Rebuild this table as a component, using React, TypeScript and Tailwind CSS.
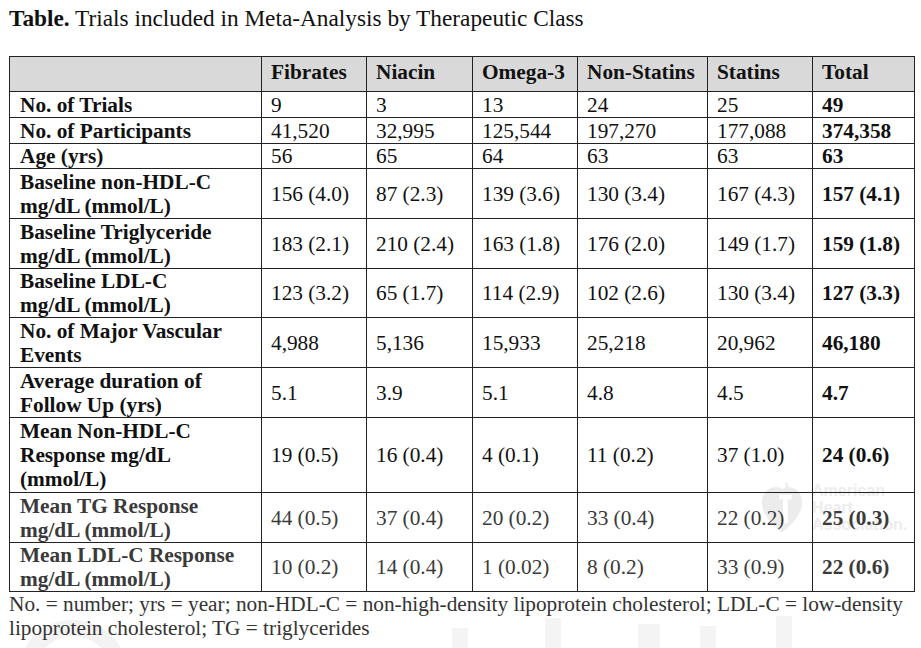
import React from "react";

type Row = {
  label: string[];
  values: string[];
  total: string;
  h: string;
  dim?: boolean;
};

const rows: Row[] = [
  { label: ["No. of Trials"], values: ["9", "3", "13", "24", "25"], total: "49", h: "h-[26px]" },
  { label: ["No. of Participants"], values: ["41,520", "32,995", "125,544", "197,270", "177,088"], total: "374,358", h: "h-[26px]" },
  { label: ["Age (yrs)"], values: ["56", "65", "64", "63", "63"], total: "63", h: "h-[25px]" },
  { label: ["Baseline non-HDL-C", "mg/dL (mmol/L)"], values: ["156 (4.0)", "87 (2.3)", "139 (3.6)", "130 (3.4)", "167 (4.3)"], total: "157 (4.1)", h: "h-[50px]" },
  { label: ["Baseline Triglyceride", "mg/dL (mmol/L)"], values: ["183 (2.1)", "210 (2.4)", "163 (1.8)", "176 (2.0)", "149 (1.7)"], total: "159 (1.8)", h: "h-[50px]" },
  { label: ["Baseline LDL-C", "mg/dL (mmol/L)"], values: ["123 (3.2)", "65 (1.7)", "114 (2.9)", "102 (2.6)", "130 (3.4)"], total: "127 (3.3)", h: "h-[49px]" },
  { label: ["No. of Major Vascular", "Events"], values: ["4,988", "5,136", "15,933", "25,218", "20,962"], total: "46,180", h: "h-[50px]" },
  { label: ["Average duration of", "Follow Up (yrs)"], values: ["5.1", "3.9", "5.1", "4.8", "4.5"], total: "4.7", h: "h-[50px]" },
  { label: ["Mean Non-HDL-C", "Response mg/dL", "(mmol/L)"], values: ["19 (0.5)", "16 (0.4)", "4 (0.1)", "11 (0.2)", "37 (1.0)"], total: "24 (0.6)", h: "h-[75px]" },
  { label: ["Mean TG Response", "mg/dL (mmol/L)"], values: ["44 (0.5)", "37 (0.4)", "20 (0.2)", "33 (0.4)", "22 (0.2)"], total: "25 (0.3)", h: "h-[50px]", dim: true },
  { label: ["Mean LDL-C Response", "mg/dL (mmol/L)"], values: ["10 (0.2)", "14 (0.4)", "1 (0.02)", "8 (0.2)", "33 (0.9)"], total: "22 (0.6)", h: "h-[49px]", dim: true },
];

const headers = ["Fibrates", "Niacin", "Omega-3", "Non-Statins", "Statins", "Total"];

// faint publisher watermark behind the lower right of the table
function Watermark() {
  return (
    <div className="absolute left-[760px] top-[478px] flex items-start gap-[8px] pointer-events-none" aria-hidden>
      <svg width="44" height="58" viewBox="0 0 46 58">
        <path
          d="M23 56 C14 48 2 38 2 24 C2 14 9 8 17 8 C20 8 22 9 23 11 C24 9 26 8 29 8 C37 8 44 14 44 24 C44 38 32 48 23 56 Z"
          fill="#ececec"
        />
        <path d="M27 2 C31 6 30 10 27 12 C28 9 26 7 27 2 Z" fill="#ececec" />
        <rect x="24" y="20" width="5" height="26" fill="#ffffff" />
        <rect x="20" y="16" width="13" height="5" fill="#ffffff" />
      </svg>
      <div className="flex flex-col pt-[4px] text-[16px] leading-[17px] font-bold text-[#ededed] font-['Liberation_Sans',Arial,sans-serif]">
        <span>American</span>
        <span>Heart</span>
        <span>Association.</span>
      </div>
    </div>
  );
}

function BottomMarks() {
  return (
    <div className="absolute left-0 top-[610px] w-[921px] h-[38px] pointer-events-none" aria-hidden>
      <div className="absolute left-[18px] top-[10px] w-[110px] h-[110px] rounded-full border-[16px] border-[#f3f3f3]" />
      <div className="absolute left-[452px] top-[18px] w-[16px] h-[30px] bg-[#f4f4f4]" />
      <div className="absolute left-[545px] top-[8px] w-[16px] h-[40px] bg-[#f4f4f4]" />
      <div className="absolute left-[638px] top-[14px] w-[22px] h-[40px] bg-[#f4f4f4]" />
      <div className="absolute left-[700px] top-[16px] w-[16px] h-[40px] bg-[#f4f4f4]" />
      <div className="absolute left-[776px] top-[6px] w-[16px] h-[40px] bg-[#f4f4f4]" />
    </div>
  );
}

export default function App() {
  return (
    <div className="relative w-[921px] h-[648px] overflow-hidden bg-white text-[#111] font-['Liberation_Serif','Times_New_Roman',serif]">
      <BottomMarks />
      <Watermark />

      <div className="relative flex flex-col pl-[9px] pt-[4px]">
        {/* Title */}
        <p className="text-[23.3px] leading-[28px]">
          <span className="font-bold">Table.</span> Trials included in Meta-Analysis by Therapeutic Class
        </p>

        {/* Table */}
        <table className="mt-[24px] w-[905px] table-fixed border-collapse text-[21.3px] leading-[24px]">
          <colgroup>
            <col className="w-[252px]" />
            <col className="w-[105px]" />
            <col className="w-[106px]" />
            <col className="w-[105px]" />
            <col className="w-[130px]" />
            <col className="w-[105px]" />
            <col className="w-[102px]" />
          </colgroup>
          <thead>
            <tr className="h-[35px] bg-[#d9d9d9]">
              <th className="border border-[#222]" />
              {headers.map((h) => (
                <th key={h} className="border border-[#222] pl-[9px] pb-[4px] text-left font-bold whitespace-nowrap">
                  {h}
                </th>
              ))}
            </tr>
          </thead>
          <tbody>
            {rows.map((r) => (
              <tr key={r.label.join(" ")} className={`${r.h} ${r.dim ? "text-[#3a3a3a]" : ""}`}>
                <td className="border border-[#222] pl-[10px] font-bold align-middle">
                  {r.label.map((l) => (
                    <div key={l} className="whitespace-nowrap">{l}</div>
                  ))}
                </td>
                {r.values.map((v, i) => (
                  <td key={i} className="border border-[#222] pl-[9px] align-middle whitespace-nowrap">
                    {v}
                  </td>
                ))}
                <td className="border border-[#222] pl-[9px] align-middle font-bold whitespace-nowrap">{r.total}</td>
              </tr>
            ))}
          </tbody>
        </table>

        {/* Footnote */}
        <p className="w-[905px] text-[21.3px] leading-[24px] text-[#333]">
          No. = number; yrs = year; non-HDL-C = non-high-density lipoprotein cholesterol; LDL-C = low-density lipoprotein cholesterol; TG = triglycerides
        </p>
      </div>
    </div>
  );
}
